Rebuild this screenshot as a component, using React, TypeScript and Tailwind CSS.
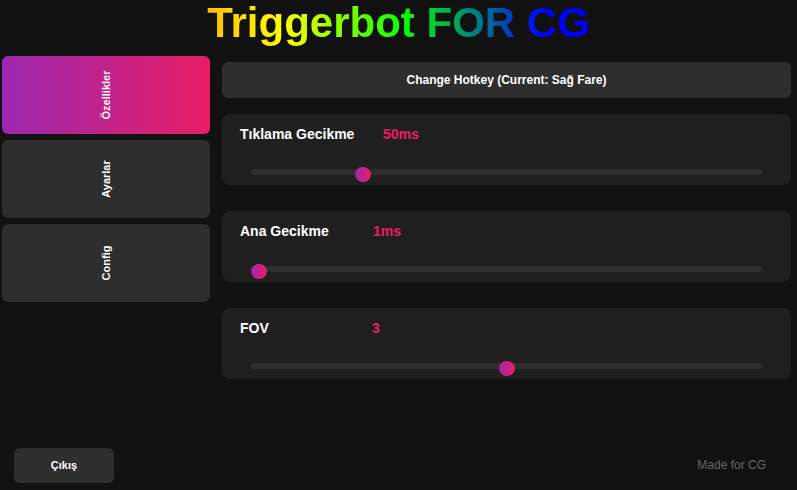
import React from "react";

type SliderRow = {
  label: string;
  value: string;
  pos: number; // 0..1 along the track
  labelW: string;
  gapTop: string;
};

const rows: SliderRow[] = [
  { label: "Tıklama Gecikme", value: "50ms", pos: 0.21, labelW: "w-[143px]", gapTop: "mt-[16px]" },
  { label: "Ana Gecikme", value: "1ms", pos: 0, labelW: "w-[133px]", gapTop: "mt-[26px]" },
  { label: "FOV", value: "3", pos: 0.5, labelW: "w-[132px]", gapTop: "mt-[26px]" },
];

const tabs = ["Özellikler", "Ayarlar", "Config"];

const SideTab = ({ label, active }: { label: string; active?: boolean }) => (
  <button
    className={
      active
        ? "relative h-[78px] w-full rounded-[6px] bg-[linear-gradient(90deg,#9c27b0,#e91e63)]"
        : "relative h-[78px] w-full rounded-[6px] bg-[#2e2e2e]"
    }
  >
    <span className="absolute left-1/2 top-1/2 -translate-x-1/2 -translate-y-1/2 -rotate-90 whitespace-nowrap text-[11px] font-bold text-white">
      {label}
    </span>
  </button>
);

const Slider = ({ pos }: { pos: number }) => (
  <div className="relative mx-[11px] mt-[25px] h-[6px] rounded-full bg-[#2e2e2e]">
    <div
      className="absolute top-[-2px] h-[15px] w-[16px] rounded-full bg-[linear-gradient(90deg,#9c27b0,#e91e63)]"
      style={{ left: `calc(${pos} * (100% - 16px))` }}
    />
  </div>
);

export default function App() {
  return (
    <div className="flex h-[490px] w-[797px] flex-col overflow-hidden bg-[#111111] font-['Liberation_Sans',Arial,sans-serif] text-white">
      <div className="flex h-[56px] shrink-0 items-start justify-center">
        <span className="inline-block bg-[linear-gradient(90deg,#ffc000_0%,#ffff00_20%,#00ff00_52%,#0000ff_88%)] bg-clip-text text-[42px] font-bold leading-[46px] text-transparent">
          Triggerbot FOR CG
        </span>
      </div>

      <div className="flex flex-1">
        <div className="ml-[2px] flex w-[208px] flex-col gap-[6px]">
          {tabs.map((t, i) => (
            <SideTab key={t} label={t} active={i === 0} />
          ))}
        </div>

        <div className="ml-[12px] mt-[6px] flex w-[569px] flex-col">
          <button className="h-[36px] rounded-[6px] bg-[#2e2e2e] text-[12px] font-bold text-white">
            Change Hotkey (Current: Sağ Fare)
          </button>

          {rows.map((r) => (
            <div key={r.label} className={`${r.gapTop} h-[71px] rounded-[8px] bg-[#1f1f1f] px-[18px] pt-[10px]`}>
              <div className="flex h-[20px] items-center text-[14px] font-bold leading-[20px]">
                <span className={`${r.labelW} whitespace-nowrap text-white`}>{r.label}</span>
                <span className="text-[#e91e63]">{r.value}</span>
              </div>
              <Slider pos={r.pos} />
            </div>
          ))}
        </div>
      </div>

      <div className="flex h-[50px] shrink-0 items-center justify-between pl-[14px] pr-[31px]">
        <button className="h-[35px] w-[100px] rounded-[6px] bg-[#2e2e2e] text-[11px] font-bold text-white">
          Çıkış
        </button>
        <span className="text-[12px] text-[#666666]">Made for CG</span>
      </div>
    </div>
  );
}
